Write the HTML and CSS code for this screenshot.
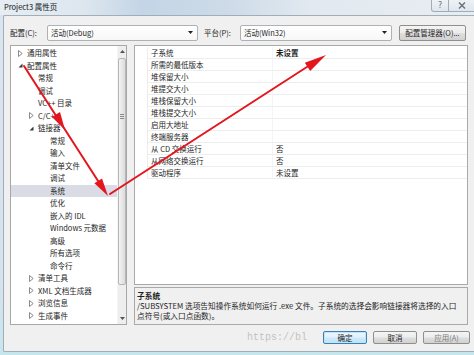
FILE: index.html
```html
<!DOCTYPE html>
<html lang="zh-CN">
<head>
<meta charset="utf-8">
<title>Project3 属性页</title>
<link rel="stylesheet" href="styles.css">
</head>
<body>
<div class="window">
  <div class="titlebar">
    <span class="title">Project3 属性页</span>
    <div class="caption-btns">
      <span class="cbtn help">?</span>
      <span class="cbtn close"><svg width="8" height="7" viewBox="0 0 8 7"><path d="M1 0.5 L7 6.5 M7 0.5 L1 6.5" stroke="#6a6f78" stroke-width="1.4" fill="none"/></svg></span>
    </div>
  </div>
  <div class="client">
    <div class="toolbar">
      <span class="lbl lbl1">配置(C):</span>
      <div class="combo combo1"><span>活动(Debug)</span><svg class="dd" width="5" height="3" viewBox="0 0 5 3"><path d="M0 0 H5 L2.5 3 Z" fill="#222"/></svg></div>
      <span class="lbl lbl2">平台(P):</span>
      <div class="combo combo2"><span>活动(Win32)</span><svg class="dd" width="5" height="3" viewBox="0 0 5 3"><path d="M0 0 H5 L2.5 3 Z" fill="#222"/></svg></div>
      <button class="btn mgr">配置管理器(O)...</button>
    </div>
    <div class="main">
      <div class="tree">
        <ul class="tree-list">
          <li class="l0 tw"><svg class="tri" width="5" height="7" viewBox="0 0 5 7"><path d="M0.5 0.5 L4.2 3.5 L0.5 6.5 Z" fill="none" stroke="#8a8a8a"/></svg>通用属性</li>
          <li class="l0 tw"><svg class="tri" width="5" height="7" viewBox="0 0 5 7"><path d="M4.5 1.5 V5.5 H0.5 Z" fill="#3a3a3a"/></svg>配置属性</li>
          <li class="l1">常规</li>
          <li class="l1">调试</li>
          <li class="l1">VC++ 目录</li>
          <li class="l1 tw"><svg class="tri" width="5" height="7" viewBox="0 0 5 7"><path d="M0.5 0.5 L4.2 3.5 L0.5 6.5 Z" fill="none" stroke="#8a8a8a"/></svg>C/C++</li>
          <li class="l1 tw"><svg class="tri" width="5" height="7" viewBox="0 0 5 7"><path d="M4.5 1.5 V5.5 H0.5 Z" fill="#3a3a3a"/></svg>链接器</li>
          <li class="l2">常规</li>
          <li class="l2">输入</li>
          <li class="l2">清单文件</li>
          <li class="l2">调试</li>
          <li class="l2 sel">系统</li>
          <li class="l2">优化</li>
          <li class="l2">嵌入的 IDL</li>
          <li class="l2">Windows 元数据</li>
          <li class="l2">高级</li>
          <li class="l2">所有选项</li>
          <li class="l2">命令行</li>
          <li class="l1 tw"><svg class="tri" width="5" height="7" viewBox="0 0 5 7"><path d="M0.5 0.5 L4.2 3.5 L0.5 6.5 Z" fill="none" stroke="#8a8a8a"/></svg>清单工具</li>
          <li class="l1 tw"><svg class="tri" width="5" height="7" viewBox="0 0 5 7"><path d="M0.5 0.5 L4.2 3.5 L0.5 6.5 Z" fill="none" stroke="#8a8a8a"/></svg>XML 文档生成器</li>
          <li class="l1 tw"><svg class="tri" width="5" height="7" viewBox="0 0 5 7"><path d="M0.5 0.5 L4.2 3.5 L0.5 6.5 Z" fill="none" stroke="#8a8a8a"/></svg>浏览信息</li>
          <li class="l1 tw"><svg class="tri" width="5" height="7" viewBox="0 0 5 7"><path d="M0.5 0.5 L4.2 3.5 L0.5 6.5 Z" fill="none" stroke="#8a8a8a"/></svg>生成事件</li>
        </ul>
        <div class="vscroll">
          <div class="sb-arrow"><svg width="5" height="3" viewBox="0 0 5 3"><path d="M0 3 H5 L2.5 0 Z" fill="#555"/></svg></div>
          <div class="sb-thumb"><span class="grip"></span></div>
          <div class="sb-track"></div>
          <div class="sb-arrow"><svg width="5" height="3" viewBox="0 0 5 3"><path d="M0 0 H5 L2.5 3 Z" fill="#555"/></svg></div>
        </div>
      </div>
      <div class="right">
        <div class="grid">
          <div class="row"><span class="gut"></span><span class="name">子系统</span><span class="val bold">未设置</span></div>
          <div class="row"><span class="gut"></span><span class="name">所需的最低版本</span><span class="val"></span></div>
          <div class="row"><span class="gut"></span><span class="name">堆保留大小</span><span class="val"></span></div>
          <div class="row"><span class="gut"></span><span class="name">堆提交大小</span><span class="val"></span></div>
          <div class="row"><span class="gut"></span><span class="name">堆栈保留大小</span><span class="val"></span></div>
          <div class="row"><span class="gut"></span><span class="name">堆栈提交大小</span><span class="val"></span></div>
          <div class="row"><span class="gut"></span><span class="name">启用大地址</span><span class="val"></span></div>
          <div class="row"><span class="gut"></span><span class="name">终端服务器</span><span class="val"></span></div>
          <div class="row"><span class="gut"></span><span class="name">从 CD 交换运行</span><span class="val">否</span></div>
          <div class="row"><span class="gut"></span><span class="name">从网络交换运行</span><span class="val">否</span></div>
          <div class="row"><span class="gut"></span><span class="name">驱动程序</span><span class="val">未设置</span></div>
          <div class="grid-fill"></div>
        </div>
        <div class="desc">
          <div class="desc-title">子系统</div>
          <div class="desc-text">/SUBSYSTEM 选项告知操作系统如何运行 .exe 文件。子系统的选择会影响链接器将选择的入口<br>点符号(或入口点函数)。</div>
        </div>
      </div>
    </div>
    <div class="footer">
      <span class="watermark">https://bl</span>
      <button class="btn ok">确定</button>
      <button class="btn">取消</button>
      <button class="btn disabled">应用(A)</button>
    </div>
  </div>
  <svg class="arrows" width="474" height="355" viewBox="0 0 474 355">
    <g stroke="#e3161e" stroke-width="2" stroke-linecap="round" fill="none">
      <path d="M24 66 L100 184"/>
      <path d="M110 194 L310 65"/>
    </g>
    <g fill="#e3161e">
      <path d="M65 130 L52 117 L60 112 Z"/>
      <path d="M108 196 L94.4 183.3 L102 178.4 Z"/>
      <path d="M326 55 L310.2 71.1 L304.8 62.7 Z"/>
    </g>
  </svg>
</div>
</body>
</html>
```

FILE: styles.css
```css
* { box-sizing: border-box; }
html, body { margin: 0; padding: 0; }
body {
  width: 474px;
  height: 355px;
  overflow: hidden;
  font-family: "Noto Sans CJK SC", "Noto Sans", sans-serif;
  font-size: 7.5px;
  color: #1e1e1e;
}
.window {
  position: relative;
  width: 474px;
  height: 355px;
  display: flex;
  flex-direction: column;
  background: linear-gradient(#dbe5ef 0%, #d6e2ec 80%, #c6e6ee 100%);
}
.titlebar {
  height: 15px;
  flex: none;
  display: flex;
  justify-content: space-between;
  align-items: flex-start;
  background: linear-gradient(to right, #e6edf3 0%, #dde6ef 18%, #c3d5e6 30%, #cddbe8 48%, #e2e9f0 66%, #e8edf2 100%);
}
.title {
  padding-left: 4px;
  line-height: 14px;
  font-size: 7.5px;
  color: #111;
}
.caption-btns { display: flex; }
.cbtn {
  height: 12px;
  display: flex;
  align-items: center;
  justify-content: center;
  border: 1px solid #a2acb8;
  border-top: none;
  background: linear-gradient(#eef2f6, #dfe6ee);
  color: #6a6f78;
}
.cbtn.help {
  width: 18px;
  border-radius: 0 0 0 3px;
  font-family: "DejaVu Sans", sans-serif;
  font-size: 8px;
  line-height: 1;
}
.cbtn.close {
  width: 25px;
  border-left: none;
  border-right: none;
}
.client {
  flex: 1;
  margin: 0 0 3px 3px;
  background: #f0f0f0;
  border: 1px solid #a3adb8;
  border-right: none;
  border-radius: 2px 0 0 2px;
  display: flex;
  flex-direction: column;
}
.toolbar {
  display: flex;
  align-items: center;
  height: 17px;
  margin-top: 8px;
  padding-left: 6px;
}
.lbl { flex: none; }
.lbl1 { width: 37px; }
.lbl2 { width: 36px; margin-left: 6px; }
.combo {
  height: 16px;
  display: flex;
  align-items: center;
  justify-content: space-between;
  padding: 0 4px 0 3px;
  border: 1px solid #adb2b9;
  border-radius: 2px;
  background: linear-gradient(#ffffff, #f7f7f7);
}
.combo1 { width: 151px; }
.combo2 { width: 152px; }
.dd { flex: none; }
.btn {
  font-family: inherit;
  font-size: 7.5px;
  color: #1e1e1e;
  padding: 0;
  border: 1px solid #8e8f8f;
  border-radius: 2px;
  background: linear-gradient(#f4f4f4 0%, #ececec 48%, #dedede 52%, #d2d2d2 100%);
  display: flex;
  align-items: center;
  justify-content: center;
}
.mgr {
  width: 67px;
  height: 16px;
  margin-left: 7px;
}
.main {
  display: flex;
  height: 280px;
  margin-top: 4px;
  padding-left: 6px;
}
.tree {
  width: 117px;
  flex: none;
  display: flex;
  border: 1px solid #a7a7a7;
  background: #fff;
}
.tree-list {
  flex: 1;
  list-style: none;
  margin: 0;
  padding: 1px 0 0;
}
.tree-list li {
  height: 12.5px;
  line-height: 12.5px;
  display: flex;
  align-items: center;
  white-space: nowrap;
}
.tri { flex: none; margin-right: 4px; }
.l0 { padding-left: 16px; }
.l0.tw { padding-left: 7px; }
.l1 { padding-left: 27px; }
.l1.tw { padding-left: 18px; }
.l2 { padding-left: 39px; }
.tree-list li.sel { background: #d9dce5; }
.vscroll {
  width: 9px;
  flex: none;
  display: flex;
  flex-direction: column;
  background: #eeeeee;
  border-left: 1px solid #f5f5f5;
}
.sb-arrow {
  height: 11px;
  flex: none;
  display: flex;
  align-items: center;
  justify-content: center;
}
.sb-thumb {
  height: 227px;
  flex: none;
  margin: 1px 0 0;
  border: 1px solid #b6b6b6;
  border-radius: 2px;
  background: linear-gradient(to right, #f2f2f2, #dcdcdc);
  display: flex;
  align-items: flex-start;
  justify-content: center;
  padding-top: 55px;
}
.grip {
  width: 4px;
  height: 5px;
  border-top: 1px solid #8a8a8a;
  border-bottom: 1px solid #8a8a8a;
  background: linear-gradient(#8a8a8a, #8a8a8a) center / 4px 1px no-repeat;
}
.sb-track { flex: 1; }
.right {
  width: 334px;
  margin-left: 7px;
  display: flex;
  flex-direction: column;
}
.grid {
  height: 240px;
  border: 1px solid #a9a9a9;
  background: #fff;
  padding-top: 1px;
  display: flex;
  flex-direction: column;
}
.row {
  height: 12px;
  display: flex;
  line-height: 11px;
}
.gut {
  width: 13px;
  flex: none;
  border-right: 1px solid #ececec;
}
.name {
  width: 125px;
  flex: none;
  padding-left: 3px;
  border-bottom: 1px solid #ededed;
  border-right: 1px solid #f4f4f4;
  white-space: nowrap;
}
.val {
  flex: 1;
  padding-left: 3px;
  border-bottom: 1px solid #ededed;
}
.bold { font-weight: bold; }
.grid-fill { flex: 1; }
.desc {
  height: 38px;
  margin-top: 2px;
  border: 1px solid #a9a9a9;
  background: #f0f0f0;
  padding: 2px 0 0 2px;
  font-size: 7.7px;
}
.desc-title {
  font-weight: bold;
  line-height: 11px;
}
.desc-text {
  line-height: 9.5px;
  white-space: nowrap;
}
.footer {
  display: flex;
  align-items: center;
  justify-content: flex-end;
  gap: 6px;
  margin-top: 6px;
  padding-right: 4px;
}
.footer .btn {
  width: 44px;
  height: 13px;
}
.footer .btn.disabled {
  width: 47px;
  color: #7d7d7d;
}
.footer .btn.ok {
  border-color: #3c7fb1;
  box-shadow: inset 0 0 0 1px #bde6fd;
  background: linear-gradient(#eef7fd 0%, #e1f1fc 48%, #cfe9fb 52%, #bfe2f9 100%);
}
.watermark {
  margin-right: 10px;
  font-family: "Liberation Mono", monospace;
  font-size: 10px;
  line-height: 12px;
  color: rgba(160, 160, 160, 0.6);
}
.arrows {
  position: absolute;
  left: 0;
  top: 0;
  pointer-events: none;
}
```
